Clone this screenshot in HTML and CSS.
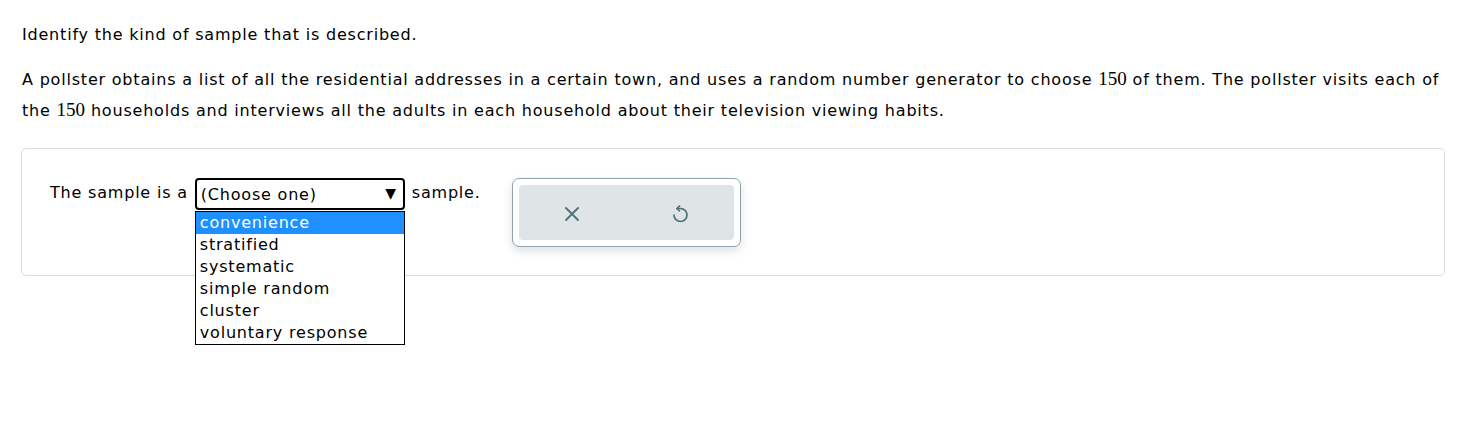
FILE: index.html
```html
<!DOCTYPE html>
<html>
<head>
<meta charset="utf-8">
<link rel="stylesheet" href="styles.css">
</head>
<body>
<div class="page">
  <p class="prompt">Identify the kind of sample that is described.</p>
  <p class="prompt">A pollster obtains a list of all the residential addresses in a certain town, and uses a random number generator to choose <span class="num">150</span> of them. The pollster visits each of the <span class="num">150</span> households and interviews all the adults in each household about their television viewing habits.</p>
  <div class="panel">
    <div class="answer">
      <span class="label">The sample is a</span>
      <div class="select-wrap">
        <div class="select"><span>(Choose one)</span><span class="arrow">&#9660;</span></div>
        <div class="listbox">
          <div class="opt active">convenience</div>
          <div class="opt">stratified</div>
          <div class="opt">systematic</div>
          <div class="opt">simple random</div>
          <div class="opt">cluster</div>
          <div class="opt">voluntary response</div>
        </div>
      </div>
      <span class="label">sample.</span>
    </div>
    <div class="tools">
      <div class="tools-inner">
        <div class="tool">
          <svg width="16" height="16" viewBox="0 0 16 16"><path d="M2 2 L14 14 M14 2 L2 14" stroke="#4f6f7a" stroke-width="1.8" fill="none" stroke-linecap="round"/></svg>
        </div>
        <div class="tool">
          <svg width="18" height="18" viewBox="0 0 18 18"><path d="M6 3.5 H9.5 A6.5 6.5 0 1 1 3 10" stroke="#4f6f7a" stroke-width="1.7" fill="none" stroke-linecap="round"/><path d="M8.5 1 L6 3.5 L8.5 6" stroke="#4f6f7a" stroke-width="1.7" fill="none" stroke-linecap="round" stroke-linejoin="round"/></svg>
        </div>
      </div>
    </div>
  </div>
</div>
</body>
</html>
```
FILE: styles.css
```css
html, body {
  margin: 0;
  padding: 0;
  background: #ffffff;
}
body {
  font-family: "DejaVu Sans", Verdana, sans-serif;
  font-size: 16px;
  letter-spacing: 0.8px;
  color: #000;
  min-height: 432px;
}
.page {
  padding: 20px 20px 0 22px;
}
.prompt {
  margin: 0 0 14px 0;
  line-height: 30px;
}
.num {
  font-family: "Liberation Serif", "Times New Roman", serif;
  font-size: 19px;
  letter-spacing: 0;
}
.panel {
  margin-top: 22px;
  margin-left: -1px;
  border: 1px solid #d5dde0;
  border-radius: 5px;
  padding: 29px 0 0 28px;
  box-sizing: border-box;
  height: 128px;
  display: flex;
  align-items: flex-start;
  gap: 31px;
}
.answer {
  display: flex;
  align-items: flex-start;
  gap: 7px;
}
.label {
  line-height: 30px;
}
.select-wrap {
  position: relative;
  width: 210px;
  z-index: 2;
}
.select {
  box-sizing: border-box;
  height: 32px;
  border: 2px solid #000;
  border-radius: 4px;
  display: flex;
  align-items: center;
  justify-content: space-between;
  padding: 0 6px 0 4px;
}
.arrow {
  font-size: 14px;
  margin-top: -2px;
}
.listbox {
  position: absolute;
  top: 33px;
  left: 0;
  width: 210px;
  box-sizing: border-box;
  border: 1px solid #000;
  background: #fff;
  z-index: 3;
}
.opt {
  height: 22px;
  line-height: 22px;
  padding-left: 4px;
}
.opt.active {
  background: #1e90ff;
  color: #fff;
}
.tools {
  width: 229px;
  height: 69px;
  box-sizing: border-box;
  border: 1px solid #8fa3ab;
  border-radius: 7px;
  background: #fff;
  padding: 6px;
  box-shadow: 0 4px 10px rgba(0, 0, 0, 0.12);
}
.tools-inner {
  height: 100%;
  background: #dfe5e7;
  border-radius: 4px;
  display: flex;
}
.tool {
  flex: 1;
  display: flex;
  align-items: center;
  justify-content: center;
  padding-top: 3px;
}
```
